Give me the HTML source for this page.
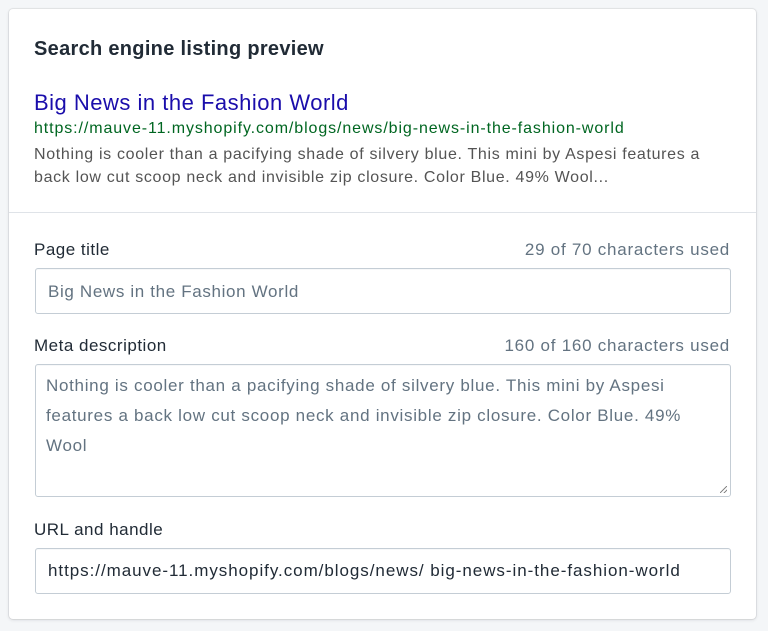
<!DOCTYPE html>
<html><head><style>
body{margin:0;background:#f4f6f8;font-family:"Liberation Sans",sans-serif;width:768px;height:631px;overflow:hidden;position:relative}
.card{position:absolute;left:9px;top:9px;width:747px;height:610px;background:#fff;border-radius:4px;box-shadow:0 0 0 1px rgba(63,63,68,.08),0 1px 3px rgba(63,63,68,.15)}
.a{position:absolute;white-space:nowrap}
.in{position:absolute;left:26px;width:696px;border:1px solid #c4cdd5;border-radius:3px;box-sizing:border-box;background:#fff;box-shadow:inset 0 1px 0 rgba(99,115,129,.05)}
.lbl{font-size:17px;letter-spacing:0.5px;color:#212b36}
.cnt{font-size:17px;letter-spacing:0.75px;color:#637381;right:26px}
</style></head><body>
<div class="card">
<div class="a" style="left:25px;top:29px;font-size:20px;letter-spacing:0.3px;font-weight:bold;color:#212b36">Search engine listing preview</div>
<div class="a" style="left:25px;top:81px;font-size:22px;letter-spacing:0.5px;color:#1a0dab">Big News in the Fashion World</div>
<div class="a" style="left:25px;top:111px;font-size:16px;letter-spacing:0.9px;color:#006621">https://mauve-11.myshopify.com/blogs/news/big-news-in-the-fashion-world</div>
<div class="a" style="left:25px;top:134px;font-size:16px;letter-spacing:0.67px;line-height:23px;color:#545454">Nothing is cooler than a pacifying shade of silvery blue. This mini by Aspesi features a<br>back low cut scoop neck and invisible zip closure. Color Blue. 49% Wool...</div>
<div class="a" style="left:0;right:0;top:203px;border-top:1px solid #dfe3e8"></div>
<div class="a lbl" style="left:25px;top:231px">Page title</div>
<div class="a cnt" style="top:231px">29 of 70 characters used</div>
<div class="in" style="top:259px;height:46px"><div class="a" style="left:12px;top:13px;font-size:17px;letter-spacing:0.65px;color:#637381">Big News in the Fashion World</div></div>
<div class="a lbl" style="left:25px;top:327px">Meta description</div>
<div class="a cnt" style="top:327px">160 of 160 characters used</div>
<div class="in" style="top:355px;height:133px"><div class="a" style="left:10px;top:6px;font-size:17px;letter-spacing:0.7px;line-height:30px;color:#637381">Nothing is cooler than a pacifying shade of silvery blue. This mini by Aspesi<br>features a back low cut scoop neck and invisible zip closure. Color Blue. 49%<br>Wool</div>
<div class="a" style="right:3px;bottom:3px;width:7px;height:7px;background:linear-gradient(135deg,transparent 45%,#888 45%,#888 55%,transparent 55%,transparent 75%,#888 75%,#888 85%,transparent 85%)"></div></div>
<div class="a lbl" style="left:25px;top:511px">URL and handle</div>
<div class="in" style="top:539px;height:46px"><div class="a" style="left:12px;top:12px;font-size:17px;letter-spacing:0.95px;color:#212b36">https://mauve-11.myshopify.com/blogs/news/ big-news-in-the-fashion-world</div></div>
</div>
</body></html>
